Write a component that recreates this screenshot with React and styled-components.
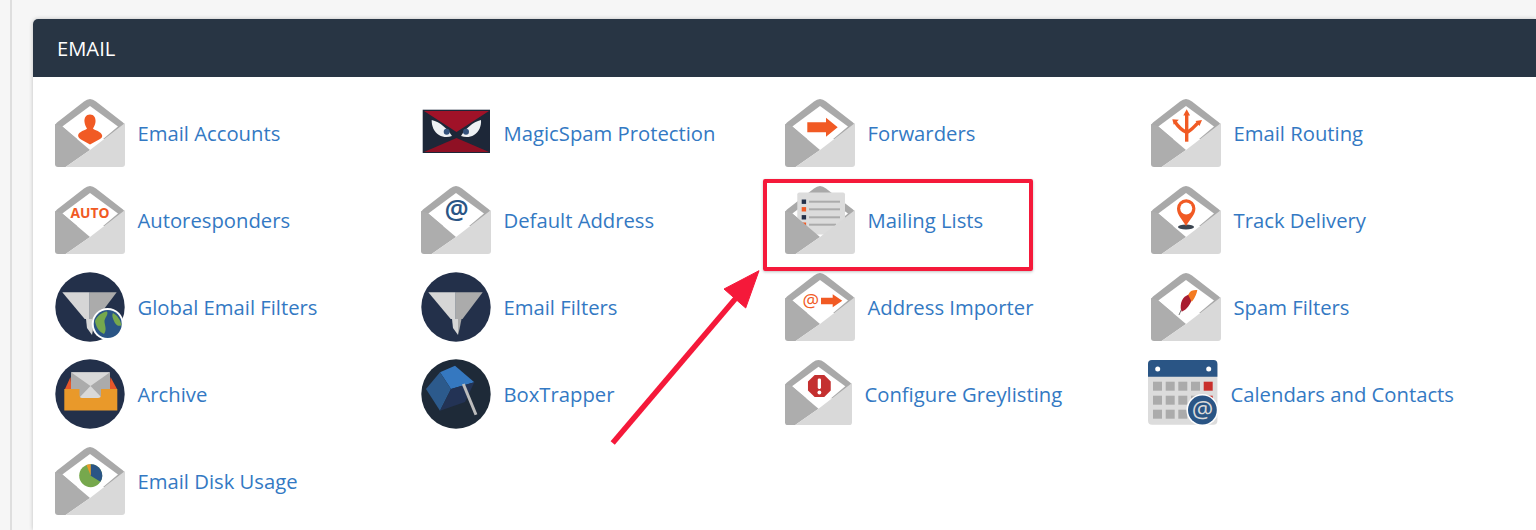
import React from "react";
import styled, { createGlobalStyle } from "styled-components";

const GlobalStyle = createGlobalStyle`
  html, body {
    margin: 0;
    padding: 0;
    height: 530px;
    overflow: hidden;
    background: #f6f6f6;
    font-family: "Open Sans", "Liberation Sans", sans-serif;
  }
`;

const Page = styled.div`
  position: relative;
  width: 1536px;
  height: 530px;
  padding: 19px 0 0 33px;
  box-sizing: border-box;
  overflow: hidden;
  display: flex;
`;

const Rail = styled.div`
  position: absolute;
  left: 10px;
  top: 0;
  bottom: 0;
  width: 2px;
  background: #dedede;
`;

const Panel = styled.section`
  flex: 1;
  background: #fff;
  border-radius: 5px 0 0 0;
  box-shadow: 0 0 4px rgba(0, 0, 0, 0.22);
`;

const PanelHeader = styled.h2`
  margin: 0;
  height: 58px;
  padding-left: 24px;
  display: flex;
  align-items: center;
  background: #283544;
  color: #fff;
  font-size: 20.2px;
  font-weight: 400;
  border-radius: 5px 0 0 0;
`;

const Grid = styled.div`
  display: grid;
  grid-template-columns: 366px 364px 366px 1fr;
  row-gap: 17px;
  padding: 21px 0 0 22px;
`;

const Item = styled.a`
  display: flex;
  align-items: center;
  height: 70px;
  gap: 12.5px;
  color: #3379c3;
  font-size: 20.25px;
  text-decoration: none;
  white-space: nowrap;
`;

const IconBox = styled.svg`
  flex: none;
  display: block;
  width: ${(p) => p.$w ?? 70}px;
  height: 70px;
  margin-left: ${(p) => p.$shift ?? 0}px;
`;

const Highlight = styled.div`
  position: absolute;
  left: 763px;
  top: 179px;
  width: 270px;
  height: 92px;
  box-sizing: border-box;
  border: 4px solid #f5193a;
  border-radius: 2px;
  box-shadow: 0 1px 3px rgba(0, 0, 0, 0.25);
`;

const ArrowMark = styled.svg`
  position: absolute;
  left: 600px;
  top: 255px;
  width: 170px;
  height: 200px;
`;

const ORANGE = "#f15a24";
const NAVY = "#23304a";
const BLUE = "#2a5585";

const Envelope = ({ children, w = 70 }) => (
  <IconBox $w={w} viewBox="0 0 70 70" preserveAspectRatio="xMidYMin meet">
    <g transform="translate(0 1)">
      <path d="M2 23.5 L29 2.5 Q35 -2.5 41 2.5 L68 23.5 Q70 25 70 27 L70 40 L0 40 L0 27 Q0 25 2 23.5 Z" fill="#a9a9a9" />
      <path d="M35 7 L63 27.5 L35 51 L7.3 27.5 Z" fill="#fff" />
      {children}
      <path d="M0 25 L7.3 27.5 L35 51 L10.6 68 L3 68 Q0 68 0 65 Z" fill="#adadad" />
      <path d="M70 24 L70 65 Q70 68 67 68 L10.6 68 L35 51 Z" fill="#d9d9d9" />
    </g>
  </IconBox>
);

const Disc = ({ children, fill = NAVY }) => (
  <IconBox viewBox="0 0 70 70">
    <circle cx="35" cy="35" r="34.7" fill={fill} />
    {children}
  </IconBox>
);

const Funnel = () => (
  <>
    <path d="M7.3 20.3 L34.7 20.3 L34.7 47 L29.7 47 Z" fill="#d6d6d6" />
    <path d="M34.7 20.3 L61.7 20.3 L41.5 47 L34.7 47 Z" fill="#ababab" />
    <path d="M31 47 L37 47 L37 63 L32 56 Z" fill="#d6d6d6" />
    <path d="M37 47 L40.5 47 L38.5 57 L37 63 Z" fill="#ababab" />
  </>
);

const PersonGlyph = () => (
  <path
    d="M35 15.5 C39 15.5 41 19 40.5 23 C40.2 26 38.8 28 38 29.5 C38.5 31 44 31.5 46.5 35 C48 37 47 39 45 40 L35 45.5 L26 40.5 C23.5 39 22.5 37 23.5 35 C26 31.5 31.5 31 32 29.5 C31 28 29.8 26 29.5 23 C29 19 31 15.5 35 15.5 Z"
    fill={ORANGE}
  />
);

const AutoGlyph = () => (
  <text x="35" y="32.3" textAnchor="middle" fontSize="13.8" fontWeight="700" fontFamily="Open Sans, sans-serif" fill={ORANGE}>
    AUTO
  </text>
);

const AtGlyph = () => (
  <text x="35.5" y="33" textAnchor="middle" fontSize="27" fontWeight="600" fontFamily="Open Sans, sans-serif" fill={BLUE}>
    @
  </text>
);

const ForwardGlyph = () => (
  <path d="M22.3 23.3 L41 23.3 L41 18.7 L52.7 28.3 L41 37.7 L41 33.3 L22.3 33.3 Z" fill={ORANGE} />
);

const ListGlyph = () => (
  <>
    <rect x="12.3" y="6.5" width="47.7" height="42" rx="2" fill="#dcdcdc" />
    {[15.7, 23.3, 31.3, 38.7].map((y, i) => (
      <g key={y}>
        <rect x="16.7" y={y - 2.2} width="4.4" height="4.4" fill={i % 2 ? ORANGE : NAVY} />
        <rect x="24" y={y - 1} width={i === 3 ? 27 : 31} height="2" fill="#ababab" />
      </g>
    ))}
  </>
);

const ImporterGlyph = () => (
  <>
    <text x="25.7" y="33.5" textAnchor="middle" fontSize="18.5" fontWeight="400" fontFamily="Open Sans, sans-serif" fill={ORANGE}>
      @
    </text>
    <path d="M36 24.7 L47.7 24.7 L47.7 21.3 L57.3 27.8 L47.7 34.3 L47.7 31.3 L36 31.3 Z" fill={ORANGE} />
  </>
);

const StopGlyph = () => (
  <>
    <path d="M31 15.7 L41 15.7 L47.8 22.5 L47.8 32 L41 38.6 L31 38.6 L24 32 L24 22.5 Z" fill="#c43030" />
    <rect x="34.2" y="19.3" width="3.4" height="11" rx="1.4" fill="#fff" />
    <circle cx="35.9" cy="34" r="2" fill="#fff" />
  </>
);

const ForkGlyph = () => (
  <g fill={ORANGE}>
    <g stroke={ORANGE} strokeWidth="3.4" fill="none">
      <path d="M35.7 15 L35.7 42.7" />
      <path d="M35.7 33.5 C31 31.5 27.5 28 24 23" />
      <path d="M35.7 33.5 C40.5 31.5 43.5 27 47 24" />
    </g>
    <path d="M32.3 16.5 L35.7 10.3 L39.1 16.5 Z" />
    <path d="M21.3 20.3 L27.8 20.8 L22.8 25.8 Z" />
    <path d="M51 21 L48.5 27 L44.5 22 Z" />
  </g>
);

const PinGlyph = () => (
  <>
    <ellipse cx="35" cy="41" rx="8" ry="2.6" fill="#3b4450" />
    <path d="M35 40 C31 33 26 29 26 22.5 A9.2 9.2 0 0 1 44.4 22.5 C44.4 29 39 33 35 40 Z" fill={ORANGE} />
    <circle cx="35.2" cy="22.5" r="6" fill="#fff" />
  </>
);

const FeatherGlyph = () => (
  <>
    <path d="M28 42 L31 35" stroke="#555" strokeWidth="0.8" />
    <path d="M29.7 35.3 C29.5 31 30.5 27.5 32.3 25.3 C34 23 36.5 22 39 21.3 L40.7 27 C39.5 30.5 38 33 35.7 35.3 C34 37 32.5 38 30.7 38.7 Z" fill="#a81c30" />
    <path d="M37.3 22.3 C38 20 39 18.5 40.7 17.7 C42.5 17 44.5 16.8 46.3 17 C46 19.5 45 21.8 44 23.7 C43 25.8 42 27.5 40.7 28.7 Z" fill="#f47a20" />
  </>
);

const PieGlyph = () => (
  <>
    <circle cx="35.7" cy="28.7" r="11.5" fill="#76a84d" />
    <path d="M35.7 28.7 L35.7 17.2 A11.5 11.5 0 0 1 45.5 34.7 Z" fill={BLUE} />
    <path d="M35.7 28.7 L31.5 18 A11.5 11.5 0 0 1 35.7 17.2 Z" fill="#e9992a" />
  </>
);

const Globe = () => (
  <>
    <circle cx="52.7" cy="52" r="16" fill="#fff" />
    <circle cx="52.7" cy="52" r="14" fill={BLUE} />
    <path d="M40 49 C42 44 47 40 52 39.5 C54 43 49 46 49.5 50 C50 54 52 58 49 62 C44 60 41 55 40 49 Z" fill="#76a84d" />
    <path d="M58 41 C62 43 65.5 48 66.5 53 C63.5 55.5 60 52 59 49 C58 46 56.5 44 58 41 Z" fill="#76a84d" />
  </>
);

const ArchiveIcon = () => (
  <Disc>
    <path d="M15.5 18 L16.5 30 L10 30 Z" fill="#e8572a" />
    <path d="M55.5 18 L54.5 30 L62 30 Z" fill="#e8572a" />
    <rect x="16" y="13.3" width="39" height="27" fill="#ababab" />
    <path d="M16 13.3 L55 13.3 L35.5 27 Z" fill="#d9d9d9" />
    <path d="M24 39 L35.5 27 L47 39 Z" fill="#d9d9d9" />
    <path d="M9.3 30 L24.5 30 L24.5 36 Q24.5 39 27 39 L43 39 Q46 39 46 36 L46 30 L62.3 30 L62.3 51.6 L9.3 51.6 Z" fill="#e9992a" />
  </Disc>
);

const MagicSpamIcon = () => (
  <IconBox viewBox="0 0 70 70">
    <rect x="1.7" y="11.7" width="67.3" height="43.3" fill="#1d2738" />
    <path d="M3 13 L68 13 L35.5 34 Z" fill="#a01228" />
    <path d="M3 54 L68 54 L35.5 40 Z" fill="#8f1024" />
    <path d="M10.7 22 C19 24 27 31 31 38 C27 39.5 22 39.5 18 37 C13 34 10.5 28 10.7 22 Z" fill="#eef1f4" />
    <path d="M60 22 C52 24 44 31 40 38 C44 39.5 49 39.5 53 37 C58 34 60.5 28 60 22 Z" fill="#eef1f4" />
    <circle cx="25.7" cy="33.7" r="3" fill="#34527c" />
    <circle cx="45" cy="33.7" r="3" fill="#34527c" />
  </IconBox>
);

const BoxTrapperIcon = () => (
  <Disc fill="#1e2a38">
    <path d="M19 13.3 L34 6.7 L53.3 23.3 L30 30 Z" fill="#3578c0" />
    <path d="M19 13.3 L30 30 L19 51.7 L5 30 Z" fill="#2c5a8c" />
    <path d="M30 30 L53.3 23.3 L44 43 L19 51.7 Z" fill="#233355" />
    <path d="M42.3 25 L55 55.7" stroke="#bdbdbd" strokeWidth="3" />
  </Disc>
);

const CalendarIcon = () => (
  <IconBox viewBox="0 0 70 70" $shift={-3}>
    <g transform="translate(0 1)">
      <rect x="0" y="0" width="69.4" height="64.7" rx="4" fill="#dcdcdc" />
      <path d="M0 16.7 L0 4 Q0 0 4 0 L65.4 0 Q69.4 0 69.4 4 L69.4 16.7 Z" fill={BLUE} />
      <circle cx="9.7" cy="9" r="2.5" fill="#fff" />
      <circle cx="60.7" cy="9" r="2.5" fill="#fff" />
      {[21.7, 35.7, 49.7].map((y, r) =>
        [5, 17.7, 30.3, 43, 55.7].map((x, c) => (
          <rect key={`${x}-${y}`} x={x} y={y} width="9" height="9" fill={c === 4 && r < 2 ? "#c9302c" : "#ababab"} />
        ))
      )}
      <circle cx="54.4" cy="50" r="16" fill="#fff" />
      <circle cx="54.4" cy="50" r="14.4" fill={BLUE} />
      <text x="54.4" y="57.5" textAnchor="middle" fontSize="24" fontFamily="Open Sans, sans-serif" fill="#d9d9d9">
        @
      </text>
    </g>
  </IconBox>
);

const items = [
  { label: "Email Accounts", icon: <Envelope><PersonGlyph /></Envelope> },
  { label: "MagicSpam Protection", icon: <MagicSpamIcon /> },
  { label: "Forwarders", icon: <Envelope><ForwardGlyph /></Envelope> },
  { label: "Email Routing", icon: <Envelope><ForkGlyph /></Envelope> },
  { label: "Autoresponders", icon: <Envelope><AutoGlyph /></Envelope> },
  { label: "Default Address", icon: <Envelope><AtGlyph /></Envelope> },
  { label: "Mailing Lists", icon: <Envelope><ListGlyph /></Envelope> },
  { label: "Track Delivery", icon: <Envelope><PinGlyph /></Envelope> },
  { label: "Global Email Filters", icon: <Disc><Funnel /><Globe /></Disc> },
  { label: "Email Filters", icon: <Disc><Funnel /></Disc> },
  { label: "Address Importer", icon: <Envelope><ImporterGlyph /></Envelope> },
  { label: "Spam Filters", icon: <Envelope><FeatherGlyph /></Envelope> },
  { label: "Archive", icon: <ArchiveIcon /> },
  { label: "BoxTrapper", icon: <BoxTrapperIcon /> },
  { label: "Configure Greylisting", icon: <Envelope w={67}><StopGlyph /></Envelope> },
  { label: "Calendars and Contacts", icon: <CalendarIcon /> },
  { label: "Email Disk Usage", icon: <Envelope><PieGlyph /></Envelope> },
];

export default function App() {
  return (
    <Page>
      <GlobalStyle />
      <Rail />
      <Panel>
        <PanelHeader>EMAIL</PanelHeader>
        <Grid>
          {items.map((item) => (
            <Item key={item.label} href="#">
              {item.icon}
              {item.label}
            </Item>
          ))}
        </Grid>
      </Panel>
      <Highlight />
      <ArrowMark viewBox="0 0 170 200">
        <path d="M12.7 188 L136 43" stroke="#f5193a" strokeWidth="5.5" fill="none" />
        <path d="M159 15.7 L124 34 L145.7 53 Z" fill="#f5193a" stroke="#f5193a" strokeWidth="1" strokeLinejoin="round" />
      </ArrowMark>
    </Page>
  );
}
